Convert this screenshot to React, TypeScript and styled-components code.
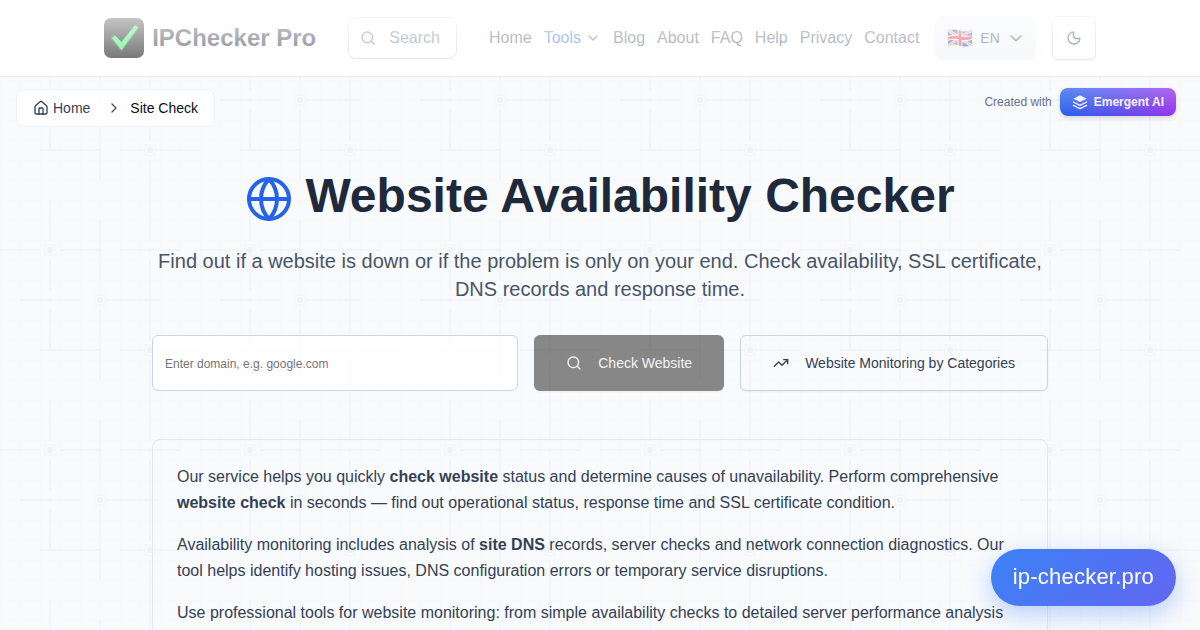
import React from "react";
import styled, { createGlobalStyle } from "styled-components";
import { Search, ChevronDown, ChevronRight, Moon, House, Globe, TrendingUp } from "lucide-react";

const GlobalStyle = createGlobalStyle`
  *, *::before, *::after { box-sizing: border-box; }
  html, body { margin: 0; }
  body {
    font-family: "Liberation Sans", Arial, sans-serif;
    font-size: 16px;
    line-height: 24px;
    color: #1e293b;
    background: #f9fafc;
  }
  button, input { font: inherit; color: inherit; margin: 0; }
  a { color: inherit; text-decoration: none; }
  svg { display: block; flex-shrink: 0; }
  h1, p, ol, ul { margin: 0; padding: 0; }
  li { list-style: none; }
`;

const Page = styled.div`
  position: relative;
  min-height: 100vh;
  overflow: hidden;
`;

const Backdrop = styled.svg`
  position: absolute;
  inset: 0;
  width: 100%;
  height: 100%;
  pointer-events: none;
`;

const Header = styled.header`
  position: relative;
  background: #fff;
  border-bottom: 1px solid #e6eaf0;
  &::after {
    content: "";
    position: absolute;
    inset: 0;
    background: linear-gradient(to bottom, rgba(255, 255, 255, 0.9), rgba(255, 255, 255, 0.33));
    pointer-events: none;
  }
`;

const HeaderInner = styled.div`
  display: flex;
  align-items: center;
  justify-content: center;
  height: 76px;
  padding: 0 16px;
`;

const Brand = styled.a`
  display: flex;
  align-items: center;
  gap: 8px;
  margin-right: 32px;
  font-size: 24px;
  line-height: 32px;
  font-weight: 700;
  white-space: nowrap;
`;

const SearchButton = styled.button`
  display: flex;
  align-items: center;
  gap: 13px;
  height: 42px;
  margin-right: 32px;
  padding: 0 16px 0 11px;
  color: #64748b;
  background: #fff;
  border: 1px solid #cbd5e1;
  border-radius: 8px;
`;

const Nav = styled.nav`
  display: flex;
  align-items: center;
  gap: 12px;
  margin-right: 16px;
  color: #475569;
  white-space: nowrap;
`;

const NavLink = styled.a<{ $active?: boolean }>`
  display: flex;
  align-items: center;
  gap: 4px;
  color: ${(p) => (p.$active ? "#2563eb" : "inherit")};
`;

const LanguageButton = styled.button`
  display: flex;
  align-items: center;
  gap: 8px;
  height: 44px;
  margin-right: 16px;
  padding: 0 12px;
  font-size: 14px;
  color: #334155;
  background: #f1f3f7;
  border: 0;
  border-radius: 8px;
`;

const ThemeButton = styled.button`
  display: flex;
  align-items: center;
  justify-content: center;
  width: 44px;
  height: 44px;
  padding: 0;
  color: #334155;
  background: #fff;
  border: 1px solid #cbd5e1;
  border-radius: 6px;
  box-shadow: 0 1px 2px rgba(0, 0, 0, 0.06);
`;

const SubBar = styled.div`
  position: relative;
  display: flex;
  align-items: flex-start;
  justify-content: space-between;
  padding: 11px 24px 0 16px;
`;

const Crumbs = styled.ol`
  display: flex;
  align-items: center;
  gap: 16px;
  margin-top: 1px;
  height: 38px;
  padding: 0 16px;
  font-size: 14px;
  line-height: 20px;
  background: rgba(255, 255, 255, 0.9);
  border: 1px solid #edf1f6;
  border-radius: 8px;
`;

const Crumb = styled.li<{ $current?: boolean }>`
  display: flex;
  align-items: center;
  gap: 8px;
  color: ${(p) => (p.$current ? "#0b0f19" : "#334155")};
  a {
    display: flex;
    align-items: center;
    gap: 4px;
  }
`;

const Credit = styled.div`
  display: flex;
  align-items: center;
  gap: 8px;
  font-size: 12px;
  line-height: 16px;
  color: #64748b;
`;

const CreditLink = styled.a`
  display: flex;
  align-items: center;
  gap: 6px;
  height: 28px;
  padding: 0 12px;
  font-weight: 700;
  color: #f4f2ff;
  background:
    linear-gradient(to bottom, rgba(255, 255, 255, 0.26), rgba(255, 255, 255, 0)),
    linear-gradient(to right, #2563eb, #9333ea);
  border-radius: 8px;
  box-shadow: 0 2px 5px rgba(0, 0, 0, 0.15);
`;

const Main = styled.main`
  position: relative;
  max-width: 928px;
  margin: 0 auto;
  padding: 40px 16px 0;
`;

const Title = styled.h1`
  display: flex;
  align-items: center;
  justify-content: center;
  gap: 12px;
  font-size: 48px;
  line-height: 58px;
  font-weight: 700;
  white-space: nowrap;
  svg { margin-top: 5px; }
`;

const Lead = styled.p`
  margin-top: 22px;
  font-size: 20px;
  line-height: 28px;
  text-align: center;
  color: #475569;
`;

const CheckForm = styled.form`
  display: flex;
  gap: 16px;
  margin-top: 32px;
`;

const DomainInput = styled.input`
  flex: 1;
  min-width: 0;
  height: 56px;
  padding: 2px 12px 0;
  font-size: 12px;
  background: rgba(255, 255, 255, 0.8);
  border: 1px solid #cbd5e1;
  border-radius: 6px;
  &::placeholder { color: #757575; opacity: 1; }
`;

const ActionButton = styled.button<{ $primary?: boolean }>`
  display: flex;
  align-items: center;
  gap: 16px;
  height: 56px;
  padding: 0 32px;
  font-size: 14px;
  white-space: nowrap;
  color: ${(p) => (p.$primary ? "#f4f4f5" : "#334155")};
  background: ${(p) => (p.$primary ? "rgba(0, 0, 0, 0.46)" : "transparent")};
  border: ${(p) => (p.$primary ? "0" : "1px solid #cbd5e1")};
  border-radius: 6px;
  box-shadow: 0 1px 2px rgba(0, 0, 0, 0.05);
`;

const Article = styled.section`
  display: flex;
  flex-direction: column;
  gap: 16px;
  margin-top: 48px;
  padding: 24px;
  line-height: 26px;
  color: #334155;
  border: 1px solid #e2e8f0;
  border-radius: 8px;
`;

const SiteBadge = styled.a`
  position: fixed;
  right: 24px;
  bottom: 24px;
  padding: 15px 22px 17px;
  font-size: 22px;
  line-height: 25px;
  letter-spacing: 0.01em;
  color: #fff;
  background: linear-gradient(135deg, #3b82f6, #6366f1);
  border-radius: 29px;
  box-shadow: 0 8px 24px rgba(59, 130, 246, 0.35);
`;

const nodes = [50, 100, 150];
const joints = [[100, 50], [150, 50], [50, 100], [150, 100]];

const Circuit = () => (
  <Backdrop aria-hidden="true">
    <defs>
      <pattern id="grid" width="20" height="20" patternUnits="userSpaceOnUse">
        <path d="M.5 0V20M0 .5H20" fill="none" stroke="#f7f8fa" />
      </pattern>
      <pattern id="circuit" width="200" height="200" patternUnits="userSpaceOnUse">
        <g fill="none" stroke="#f2f4f7" strokeWidth="2">
          <path d="M0 50H40M60 50H100M120 50H180M20 100H80M106 100H160M40 150H100M120 150H200" />
          <path d="M50 0V40M50 60V90M50 110V150M100 20V80M100 110V180M150 0V40M150 60V140M150 160V200" />
        </g>
        {nodes.map((n) => (
          <g key={n}>
            <rect x={n - 5} y={n - 5} width="10" height="10" fill="#f9fafc" stroke="#f2f4f8" />
            <circle cx={n} cy={n} r="3" fill="#eff2f7" />
          </g>
        ))}
        {joints.map(([x, y]) => (
          <circle key={`${x}-${y}`} cx={x} cy={y} r="2" fill="#f0f3f7" />
        ))}
      </pattern>
    </defs>
    <rect width="100%" height="100%" fill="url(#grid)" />
    <rect width="100%" height="100%" fill="url(#circuit)" />
  </Backdrop>
);

const Logo = () => (
  <svg width="40" height="40" viewBox="0 0 40 40" aria-hidden="true">
    <rect width="40" height="40" rx="7" fill="#050505" />
    <path d="M9.500 20L17.500 29L32 9.500" fill="none" stroke="#22ee55" strokeWidth="6" opacity="0.25" strokeLinecap="round" />
    <path d="M8.500 20L11 18L17.500 24.500L31 8L33.500 9.500L17.500 31.500z" fill="#22ee55" stroke="#22ee55" strokeWidth="1" strokeLinejoin="round" />
  </svg>
);

const Flag = () => (
  <svg width="25" height="18" viewBox="0 0 25 18" aria-hidden="true">
    <defs>
      <clipPath id="flag">
        <path d="M1 1.500Q7-.5 12.500 1.500T25 1V16.500Q18 18.500 12.500 16.500T1 17z" />
      </clipPath>
    </defs>
    <g clipPath="url(#flag)" fill="none">
      <path d="M0 0H25V18H0z" fill="#1c3f94" />
      <path d="M1 1L25 17M25 1L1 17" stroke="#fff" strokeWidth="3" />
      <path d="M1 1L25 17M25 1L1 17" stroke="#dc2638" strokeWidth="1" />
      <path d="M13 0V18M0 9.500Q7 7.500 13 9T25 8.500" stroke="#fff" strokeWidth="5" />
      <path d="M13 0V18M0 9.500Q7 7.500 13 9T25 8.500" stroke="#dc2638" strokeWidth="3" />
    </g>
  </svg>
);

const WideChevron = () => (
  <svg width="16" height="16" viewBox="0 0 24 24" fill="none" stroke="currentColor" strokeWidth="2" strokeLinecap="round" strokeLinejoin="round" aria-hidden="true">
    <path d="M19 9l-7 7-7-7" />
  </svg>
);

const Layers = () => (
  <svg width="16" height="16" viewBox="0 0 24 24" aria-hidden="true">
    <path d="M12 2L2 7l10 5 10-5z" fill="currentColor" />
    <path d="M2 17l10 5 10-5M2 12l10 5 10-5" fill="none" stroke="currentColor" strokeWidth="2" strokeLinecap="round" strokeLinejoin="round" />
  </svg>
);

const links = ["Blog", "About", "FAQ", "Help", "Privacy", "Contact"];

export default function App() {
  return (
    <Page>
      <GlobalStyle />
      <Circuit />
      <Header>
        <HeaderInner>
          <Brand href="#"><Logo />IPChecker Pro</Brand>
          <SearchButton type="button"><Search size={16} />Search</SearchButton>
          <Nav>
            <NavLink href="#">Home</NavLink>
            <NavLink href="#" $active>Tools<ChevronDown size={16} /></NavLink>
            {links.map((label) => <NavLink href="#" key={label}>{label}</NavLink>)}
          </Nav>
          <LanguageButton type="button"><Flag />EN<WideChevron /></LanguageButton>
          <ThemeButton type="button" aria-label="Dark mode"><Moon size={16} /></ThemeButton>
        </HeaderInner>
      </Header>
      <SubBar>
        <nav aria-label="Breadcrumb">
          <Crumbs>
            <Crumb><a href="#"><House size={16} />Home</a></Crumb>
            <Crumb $current><ChevronRight size={16} color="#475569" />Site Check</Crumb>
          </Crumbs>
        </nav>
        <Credit>
          Created with
          <CreditLink href="#"><Layers />Emergent AI</CreditLink>
        </Credit>
      </SubBar>
      <Main>
        <Title><Globe size={48} color="#2563eb" />Website Availability Checker</Title>
        <Lead>
          Find out if a website is down or if the problem is only on your end. Check availability, SSL certificate, DNS records and response time.
        </Lead>
        <CheckForm onSubmit={(e) => e.preventDefault()}>
          <DomainInput aria-label="Domain" placeholder="Enter domain, e.g. google.com" />
          <ActionButton $primary><Search size={16} />Check Website</ActionButton>
          <ActionButton type="button"><TrendingUp size={16} />Website Monitoring by Categories</ActionButton>
        </CheckForm>
        <Article>
          <p>
            Our service helps you quickly <strong>check website</strong> status and determine causes of unavailability. Perform comprehensive <strong>website check</strong> in seconds — find out operational status, response time and SSL certificate condition.
          </p>
          <p>
            Availability monitoring includes analysis of <strong>site DNS</strong> records, server checks and network connection diagnostics. Our tool helps identify hosting issues, DNS configuration errors or temporary service disruptions.
          </p>
          <p>
            Use professional tools for website monitoring: from simple availability checks to detailed server performance analysis
          </p>
        </Article>
      </Main>
      <SiteBadge href="#">ip-checker.pro</SiteBadge>
    </Page>
  );
}
